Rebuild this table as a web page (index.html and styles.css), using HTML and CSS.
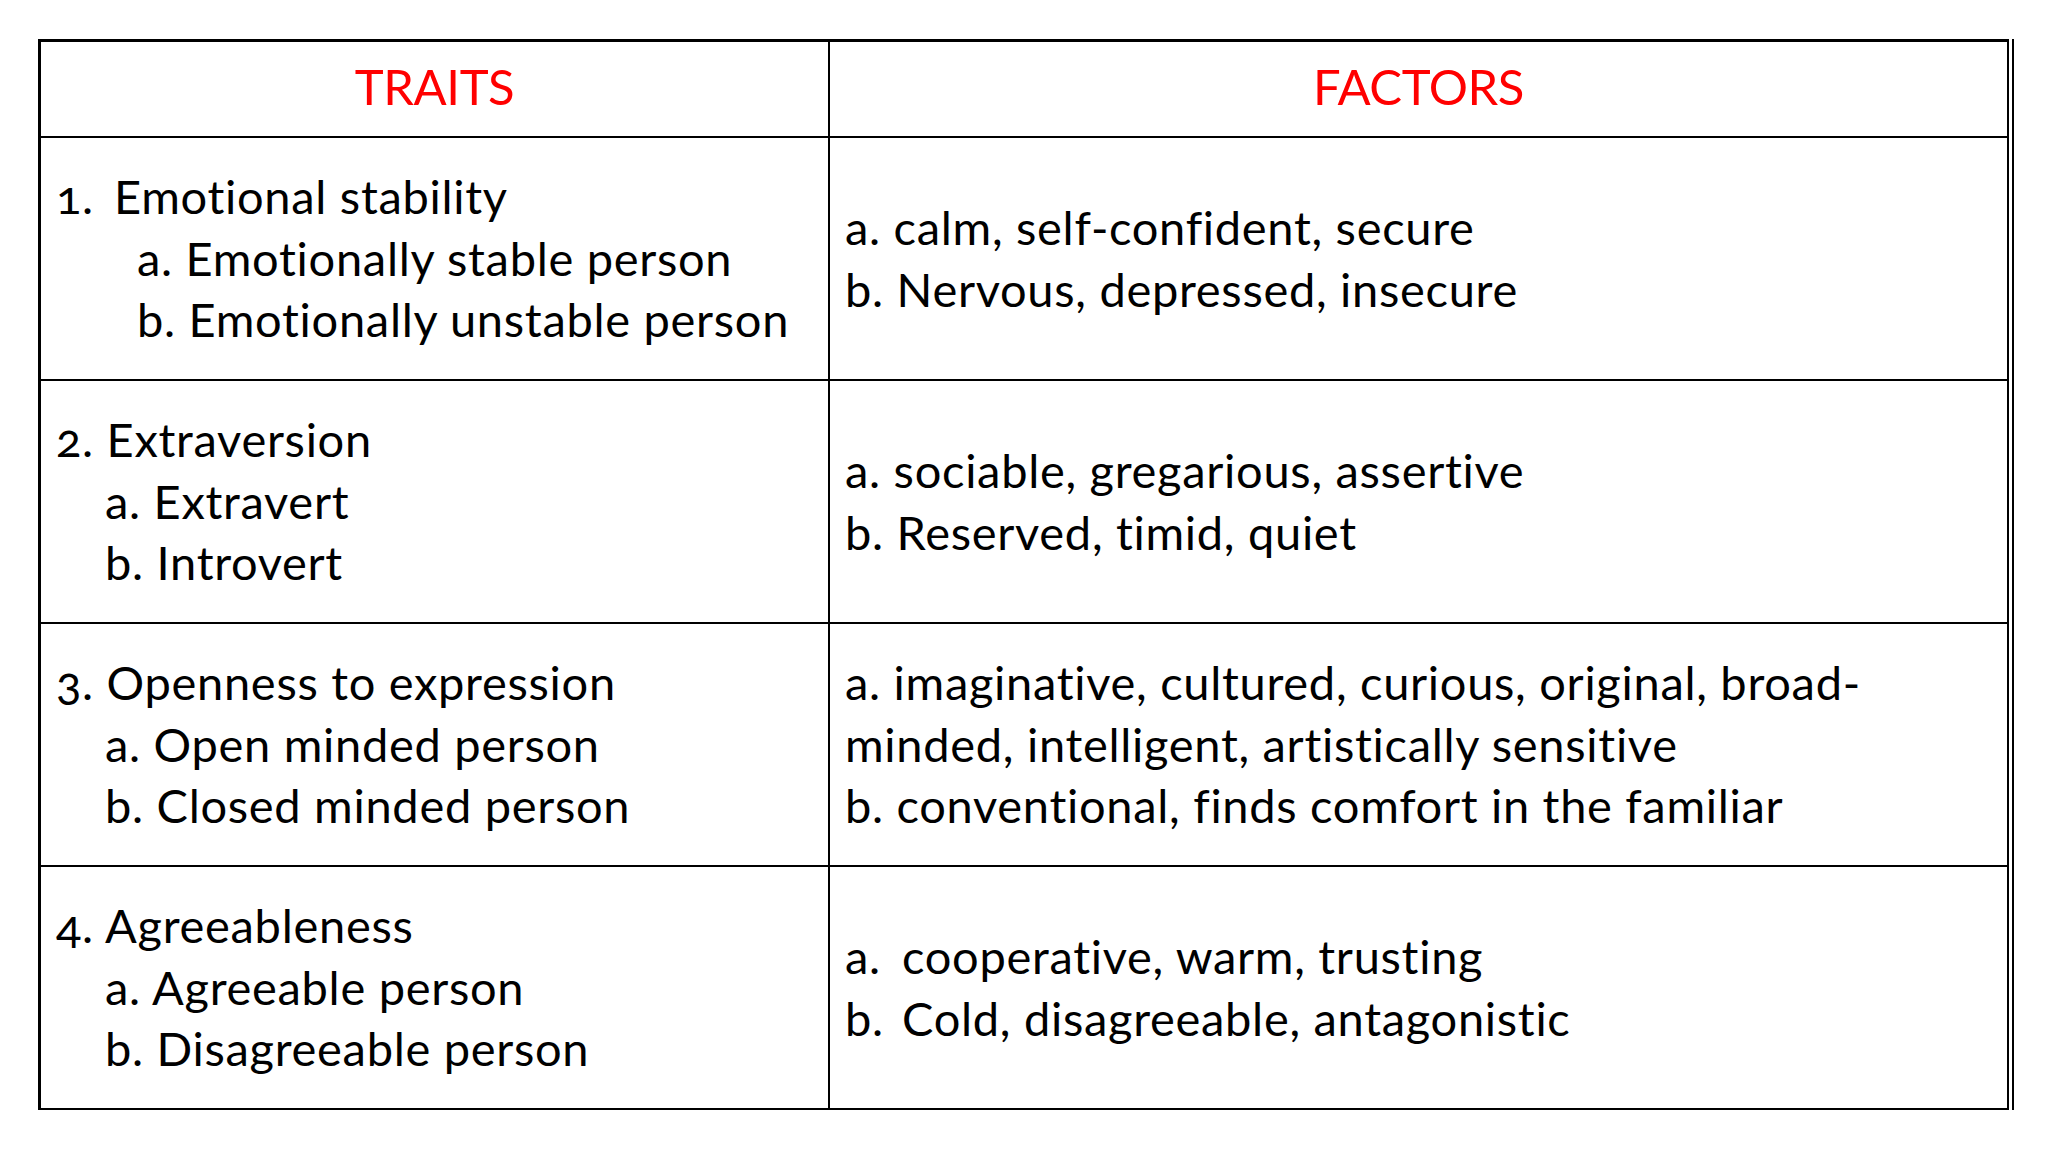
FILE: index.html
```html
<!DOCTYPE html>
<html lang="en">
<head>
<meta charset="utf-8">
<title>Traits and Factors</title>
<link rel="stylesheet" href="styles.css">
</head>
<body>
<main class="page">
  <div class="grid">
    <div class="cell head">TRAITS</div>
    <div class="cell head">FACTORS</div>

    <div class="cell trait">
      <div class="line"><span class="num wide">1.</span>Emotional stability</div>
      <div class="line sub deep">a. Emotionally stable person</div>
      <div class="line sub deep">b. Emotionally unstable person</div>
    </div>
    <div class="cell factor">
      <div class="line">a. calm, self-confident, secure</div>
      <div class="line">b. Nervous, depressed, insecure</div>
    </div>

    <div class="cell trait">
      <div class="line">2. Extraversion</div>
      <div class="line sub">a. Extravert</div>
      <div class="line sub">b. Introvert</div>
    </div>
    <div class="cell factor">
      <div class="line">a. sociable, gregarious, assertive</div>
      <div class="line">b. Reserved, timid, quiet</div>
    </div>

    <div class="cell trait">
      <div class="line">3. Openness to expression</div>
      <div class="line sub">a. Open minded person</div>
      <div class="line sub">b. Closed minded person</div>
    </div>
    <div class="cell factor">
      <div class="line">a. imaginative, cultured, curious, original, broad-</div>
      <div class="line">minded, intelligent, artistically sensitive</div>
      <div class="line">b. conventional, finds comfort in the familiar</div>
    </div>

    <div class="cell trait">
      <div class="line">4. Agreeableness</div>
      <div class="line sub">a. Agreeable person</div>
      <div class="line sub">b. Disagreeable person</div>
    </div>
    <div class="cell factor">
      <div class="line"><span class="num">a.</span>cooperative, warm, trusting</div>
      <div class="line"><span class="num">b.</span>Cold, disagreeable, antagonistic</div>
    </div>
  </div>
</main>
</body>
</html>
```

FILE: styles.css
```css
html, body {
  margin: 0;
  padding: 0;
  background: #ffffff;
}

.page {
  padding: 39px 0 0 38px;
  font-family: Lato, "Open Sans", sans-serif;
  font-variant-numeric: oldstyle-nums;
  color: #000000;
}

.grid {
  display: grid;
  grid-template-columns: 789px 1179px;
  grid-template-rows: 96px 243px 243px 243px 243px;
  width: 1968px;
  border-top: 3px solid #000;
  border-left: 3px solid #000;
  background: #fff;
  box-shadow: 3px 0 0 0 #fff, 0 3px 0 0 #fff, 5px 0 0 0 #000, 0 5px 0 0 #000;
}

.cell {
  box-sizing: border-box;
  border-right: 2px solid #000;
  border-bottom: 2px solid #000;
  display: flex;
  flex-direction: column;
  justify-content: center;
  padding-left: 15px;
  font-size: 47px;
  letter-spacing: 0.7px;
  line-height: 61.5px;
  white-space: nowrap;
}

.head {
  align-items: center;
  padding-left: 0;
  color: #ff0000;
  font-size: 49px;
  letter-spacing: -0.4px;
  padding-bottom: 4px;
}

.sub {
  padding-left: 49px;
}

.sub.deep {
  padding-left: 81px;
}

.num {
  display: inline-block;
}

.factor .num {
  width: 57px;
}

.num.wide {
  width: 58px;
}
```
